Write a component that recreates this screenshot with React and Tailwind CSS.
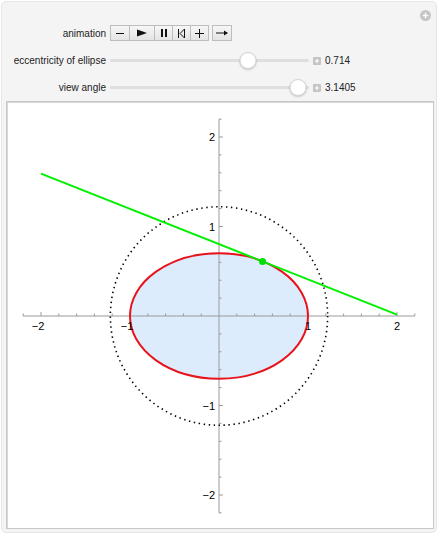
import React from 'react';

const CX = 219;
const CY = 317;
const SX = 89;
const SY = 89.5;
const px = (x) => CX + x * SX;
const py = (y) => CY - y * SY;

const ecc = 0.714;
const b = Math.sqrt(1 - ecc * ecc);
const x0 = 0.49;
const y0 = b * Math.sqrt(1 - x0 * x0);
const lineY = (x) => ((1 - x * x0) * b * b) / y0;
const R = Math.sqrt(1 + b * b);

const ticks = [];
for (let i = -11; i <= 11; i++) ticks.push(i / 5);

const PlusBox = () => (
  <span className="inline-flex items-center justify-center w-[8px] h-[8px] bg-[#c4c4c4] rounded-[1px]">
    <svg width="6" height="6" viewBox="0 0 6 6">
      <path d="M3 0.8V5.2M0.8 3H5.2" stroke="#fff" strokeWidth="1.2" />
    </svg>
  </span>
);

const Slider = ({ pos, value }) => (
  <div className="flex items-center">
    <div className="relative w-[199px] h-[16px] flex items-center">
      <div className="w-full h-[3px] rounded-full bg-[#dedede]" />
      <div
        className="absolute top-0 w-[17px] h-[17px] -translate-x-1/2 rounded-full bg-white border border-[#d4d4d4] shadow-[0_1px_2px_rgba(0,0,0,0.2)]"
        style={{ left: pos }}
      />
    </div>
    <div className="ml-[4px] mt-[1px] flex">
      <PlusBox />
    </div>
    <span className="ml-[4px] text-[10px] text-[#222]">{value}</span>
  </div>
);

const Plot = () => (
  <svg width="425" height="426" viewBox="7 103 425 426" className="block">
    <ellipse cx={CX} cy={CY} rx={SX} ry={b * SY} fill="#ddecfc" />
    {/* axes */}
    <line x1={px(-2.2)} y1={CY} x2={px(2.2)} y2={CY} stroke="#9a9a9a" strokeWidth="1" />
    <line x1={CX} y1={py(2.2)} x2={CX} y2={py(-2.2)} stroke="#9a9a9a" strokeWidth="1" />
    {ticks.map((t) => {
      const major = Math.abs(t - Math.round(t)) < 1e-6;
      if (Math.abs(t) < 1e-6) return null;
      const len = major ? 4 : 2.5;
      return (
        <g key={t} stroke="#9a9a9a" strokeWidth="1">
          <line x1={px(t)} y1={CY} x2={px(t)} y2={CY - len} />
          <line x1={CX} y1={py(t)} x2={CX + len} y2={py(t)} />
        </g>
      );
    })}
    <ellipse cx={CX} cy={CY} rx={SX} ry={b * SY} fill="none" stroke="#e8141c" strokeWidth="2" />
    <ellipse
      cx={CX}
      cy={CY}
      rx={R * SX}
      ry={R * SY}
      fill="none"
      stroke="#000"
      strokeWidth="1.6"
      strokeDasharray="1.4 3.6"
    />
    <line x1={px(-2)} y1={py(lineY(-2))} x2={px(2)} y2={py(lineY(2))} stroke="#00f000" strokeWidth="2" />
    <circle cx={px(x0)} cy={py(y0)} r="3.5" fill="#00e000" />
    <g fontFamily="'Liberation Sans', Arial, sans-serif" fontSize="11" fill="#000">
      {[-2, -1, 1, 2].map((t) => (
        <text key={'x' + t} x={px(t) - (t < 0 ? 3 : 0)} y={CY + 14} textAnchor="middle">
          {t < 0 ? '\u2212' + Math.abs(t) : t}
        </text>
      ))}
      {[-2, -1, 1, 2].map((t) => (
        <text key={'y' + t} x={CX - 4} y={py(t) + 4} textAnchor="end">
          {t < 0 ? '\u2212' + Math.abs(t) : t}
        </text>
      ))}
    </g>
  </svg>
);

export default function App() {
  return (
    <div className="w-[439px] h-[535px] bg-white p-[1px] font-['Liberation_Sans',Arial,sans-serif]">
      <div className="relative w-[436px] h-[532px] rounded-[5px] bg-[#f4f4f4] border border-[#e6e6e6] flex flex-col">
        <div className="absolute right-[5px] top-[8px] w-[11px] h-[11px] rounded-full bg-[#c6c6c6] flex items-center justify-center">
          <svg width="7" height="7" viewBox="0 0 7 7">
            <path d="M3.5 0.8V6.2M0.8 3.5H6.2" stroke="#fff" strokeWidth="1.4" />
          </svg>
        </div>

        <div className="flex items-center h-[16px] mt-[23px]">
          <span className="w-[104px] text-right text-[10px] text-[#222]">animation</span>
          <div className="ml-[4px] flex h-[16px] border border-[#bdbdbd] bg-gradient-to-b from-[#f7f7f7] to-[#e4e4e4]">
            <div className="flex items-center justify-center h-full w-[19px] border-r border-[#bdbdbd]">
              <svg width="10" height="10" viewBox="0 0 10 10">
                <path d="M1 5.5H9" stroke="#111" strokeWidth="1" />
              </svg>
            </div>
            <div className="flex items-center justify-center h-full w-[25px] border-r border-[#bdbdbd]">
              <svg width="12" height="10" viewBox="0 0 12 10">
                <path d="M1 1.5L11 5L1 8.5Z" fill="#111" />
              </svg>
            </div>
            <div className="flex items-center justify-center h-full w-[18px] border-r border-[#bdbdbd]">
              <svg width="8" height="10" viewBox="0 0 8 10">
                <path d="M1 1H3V9H1ZM5 1H7V9H5Z" fill="#111" />
              </svg>
            </div>
            <div className="flex items-center justify-center h-full w-[18px] border-r border-[#bdbdbd]">
              <svg width="9" height="11" viewBox="0 0 9 11">
                <path d="M1.5 1V10M7.5 1L3 5.5L7.5 10Z" stroke="#111" strokeWidth="1" fill="none" />
              </svg>
            </div>
            <div className="flex items-center justify-center h-full w-[17px]">
              <svg width="11" height="11" viewBox="0 0 11 11">
                <path d="M5.5 1V10M1 5.5H10" stroke="#111" strokeWidth="1" />
              </svg>
            </div>
          </div>
          <div className="ml-[3px] flex items-center justify-center h-[16px] w-[20px] border border-[#bdbdbd] bg-gradient-to-b from-[#f7f7f7] to-[#e4e4e4]">
            <svg width="14" height="8" viewBox="0 0 14 8">
              <path d="M1 4H12" stroke="#111" strokeWidth="1" />
              <path d="M9 1.5L13 4L9 6.5Z" fill="#111" />
            </svg>
          </div>
        </div>

        <div className="flex items-center h-[16px] mt-[11px]">
          <span className="w-[104px] text-right text-[10px] text-[#222]">eccentricity of ellipse</span>
          <div className="ml-[4px]">
            <Slider pos={138} value="0.714" />
          </div>
        </div>

        <div className="flex items-center h-[16px] mt-[11px]">
          <span className="w-[104px] text-right text-[10px] text-[#222]">view angle</span>
          <div className="ml-[4px]">
            <Slider pos={188} value="3.1405" />
          </div>
        </div>

        <div className="mt-[6px] ml-[4px] w-[428px] h-[428px] bg-white border border-[#c8c8c8] shadow-[inset_1px_1px_0_#d8d8d8]">
          <Plot />
        </div>
      </div>
    </div>
  );
}
